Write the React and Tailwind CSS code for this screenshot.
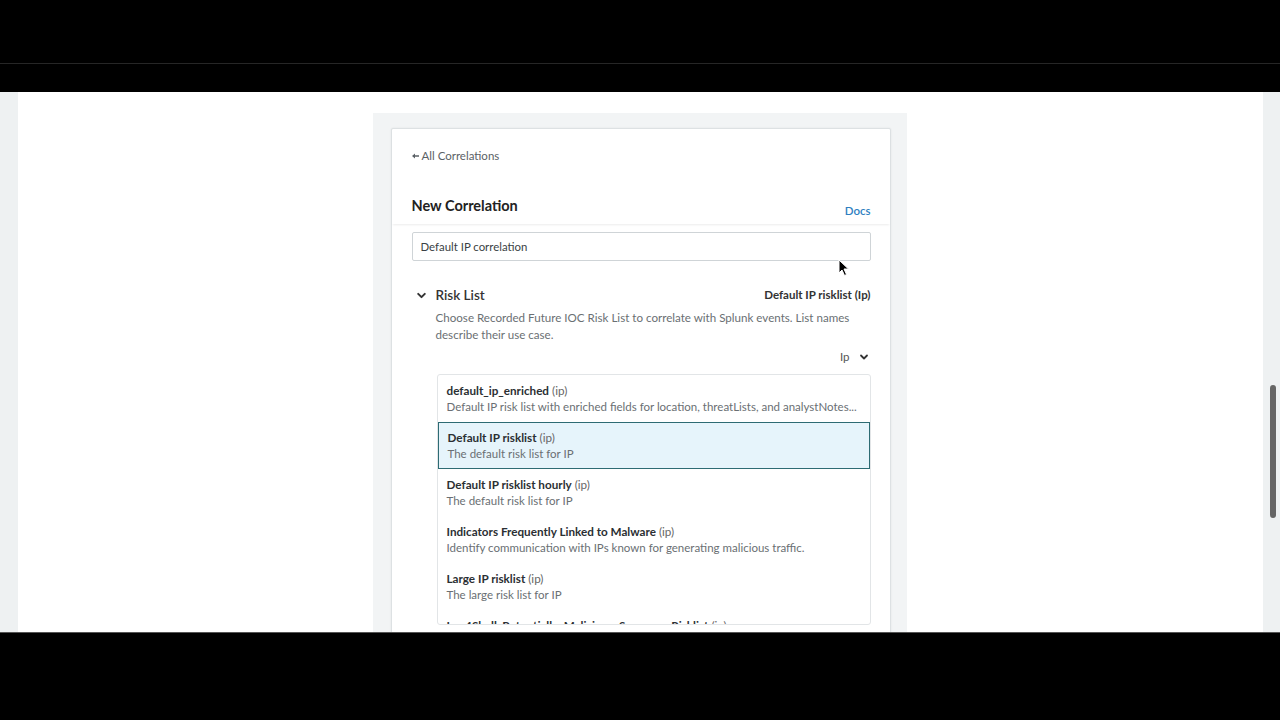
import React from "react";

const items = [
  { t: "default_ip_enriched", d: "Default IP risk list with enriched fields for location, threatLists, and analystNotes..." },
  { t: "Default IP risklist", d: "The default risk list for IP", sel: true },
  { t: "Default IP risklist hourly", d: "The default risk list for IP" },
  { t: "Indicators Frequently Linked to Malware", d: "Identify communication with IPs known for generating malicious traffic." },
  { t: "Large IP risklist", d: "The large risk list for IP" },
  { t: "Log4Shell_Potentially_Malicious_Scanners_Risklist", d: "IPs potentially scanning for Log4Shell" },
];

function Chevron({ className }) {
  return (
    <svg viewBox="0 0 10 10" className={className} fill="none" stroke="currentColor" strokeWidth="1.8" strokeLinecap="round" strokeLinejoin="round">
      <path d="M2 3.5 L5 6.5 L8 3.5" />
    </svg>
  );
}

export default function App() {
  return (
    <div className="w-[1280px] h-[720px] overflow-hidden bg-black flex flex-col relative" style={{ fontFamily: "Lato, 'Open Sans', sans-serif" }}>
      <div className="h-[63px] bg-black" />
      <div className="h-px bg-[#262626]" />
      <div className="h-[28px] bg-black" />
      <div className="h-[540px] flex bg-white overflow-hidden">
        <div className="w-[18px] bg-[#eef1f2]" />
        <div className="flex-1 flex justify-center">
          <div className="w-[534px] mr-[2px] mt-[21px] bg-[#f2f4f5] pl-[18px] pr-[16px] pt-[15px] overflow-hidden">
            <div className="bg-white border border-[#dde1e3] rounded-[2px] shadow-[0_0_2px_rgba(0,0,0,0.08)] pb-[40px]">
              <div className="pl-[20px] pr-[19px] pt-[19px] pb-[9px] shadow-[0_2px_2px_-1px_rgba(0,0,0,0.08)]">
                <div className="text-[11.5px] leading-[16px] text-[#5b6166] flex items-center h-[16px]">
                  <svg width="7" height="6" viewBox="0 0 7 6" className="mr-[3px]">
                    <path d="M0 3 L3 0.5 L3 2.3 L7 2.3 L7 3.7 L3 3.7 L3 5.5 Z" fill="#5b6166" />
                  </svg>
                  <span>All Correlations</span>
                </div>
                <div className="mt-[33px] flex items-center justify-between h-[18px]">
                  <div className="text-[14.5px] leading-[18px] font-bold text-[#222]">New Correlation</div>
                  <div className="text-[11.5px] leading-[14px] font-semibold text-[#2f7fc1] mt-[9px]">Docs</div>
                </div>
              </div>
              <div className="pl-[20px] pr-[19px] pt-[8px]">
                <div className="h-[29px] border border-[#cfd4d7] rounded-[2px] flex items-center px-[8px] text-[11.4px] text-[#3a3f44]">
                  Default IP correlation
                </div>
                <div className="mt-[25px] flex items-center justify-between h-[18px]">
                  <div className="flex items-center">
                    <Chevron className="w-[11px] h-[11px] text-[#333] ml-[4px]" />
                    <span className="ml-[9px] text-[13.5px] leading-[18px] font-semibold text-[#333]">Risk List</span>
                  </div>
                  <span className="text-[11.5px] leading-[18px] font-bold text-[#333]">Default IP risklist (Ip)</span>
                </div>
                <div className="ml-[24px] mt-[5px] text-[11.6px] leading-[17px] text-[#6a6f73]">
                  Choose Recorded Future IOC Risk List to correlate with Splunk events. List names describe their use case.
                </div>
                <div className="flex justify-end items-center mt-[5px] h-[18px] text-[11.5px] text-[#555]">
                  <span>Ip</span>
                  <Chevron className="w-[10px] h-[10px] ml-[9px] mr-[2px] text-[#333]" />
                </div>
                <div className="ml-[25px] mt-[8px] border border-[#e2e5e7] rounded-[3px] h-[251px] overflow-hidden">
                  {items.map((it, i) => (
                    <div
                      key={i}
                      className={
                        it.sel
                          ? "h-[47px] px-[9px] pt-[6px] bg-[#e6f4fb] border border-[#2d6b73]"
                          : "h-[47px] px-[9px] pt-[7px]"
                      }
                    >
                      <div className="text-[11.7px] leading-[16px] text-[#2b2f33] whitespace-nowrap">
                        <span className="font-bold">{it.t}</span>
                        <span className="text-[#666]"> (ip)</span>
                      </div>
                      <div className="text-[11.5px] leading-[17px] text-[#6a6f73] whitespace-nowrap">{it.d}</div>
                    </div>
                  ))}
                </div>
              </div>
            </div>
          </div>
        </div>
        <div className="w-[17px] bg-[#eef1f2] flex justify-center">
          <div className="mt-[293px] ml-[3px] w-[6px] h-[133px] rounded-[3px] bg-[#666]" />
        </div>
      </div>
      <div className="h-px bg-[#555]" />
      <div className="flex-1 bg-black" />
      <svg className="absolute left-[838px] top-[259px]" width="12" height="18" viewBox="0 0 12 18">
        <path d="M1 1 L1 14 L4 11 L6.5 16.5 L8.5 15.5 L6 10 L10.5 10 Z" fill="#000" stroke="#fff" strokeWidth="1" />
      </svg>
    </div>
  );
}
